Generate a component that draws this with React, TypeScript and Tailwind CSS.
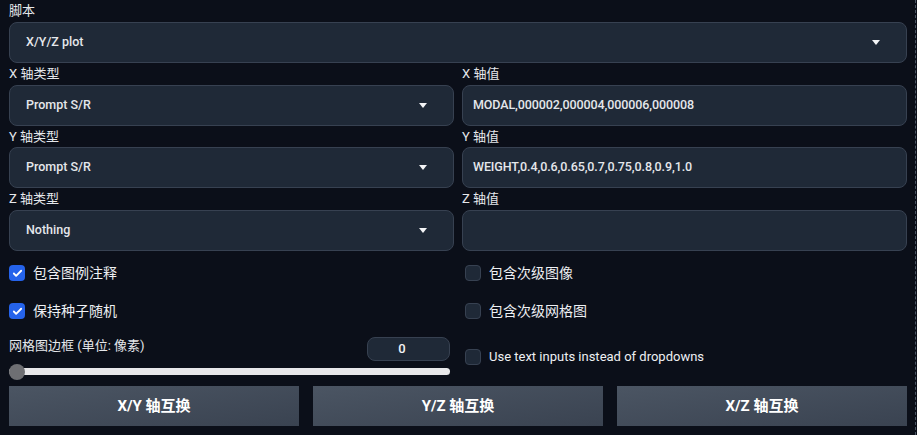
import { Check } from 'lucide-react';

const font = { fontFamily: 'Roboto, "Noto Sans CJK SC", sans-serif' };

function Caret() {
  return (
    <svg width="8" height="5" viewBox="0 0 8 5" className="shrink-0">
      <path d="M0 0H8L4 5Z" fill="#f3f4f6" />
    </svg>
  );
}

function Label({ text, className = '' }: { text: string; className?: string }) {
  return <div className={`text-[13px] text-[#e5e7eb] ${className}`}>{text}</div>;
}

function Dropdown({ value }: { value: string }) {
  return (
    <div className="h-[41px] flex items-center justify-between rounded-lg border border-[#374151] bg-[#1f2937] pl-[16px] pr-[26px]">
      <span className="text-[12.5px] font-medium text-[#e5e7eb]">{value}</span>
      <Caret />
    </div>
  );
}

function TextBox({ value }: { value: string }) {
  return (
    <div className="h-[41px] flex items-center rounded-lg border border-[#374151] bg-[#1f2937] px-[10px]">
      <span className="text-[12.5px] font-medium tracking-[-0.1px] text-[#e5e7eb]">{value}</span>
    </div>
  );
}

function CheckRow({ label, checked, className = '', textSize = 'text-[14px]' }: { label: string; checked?: boolean; className?: string; textSize?: string }) {
  return (
    <div className={`h-[38px] flex items-center gap-[8px] ${className}`}>
      {checked ? (
        <span className="w-[16px] h-[16px] rounded-[4px] bg-[#2563eb] flex items-center justify-center">
          <Check size={11} strokeWidth={4} color="white" />
        </span>
      ) : (
        <span className="w-[16px] h-[16px] rounded-[4px] bg-[#1f2937] border border-[#374151]" />
      )}
      <span className={`${textSize} text-[#eef0f3]`}>{label}</span>
    </div>
  );
}

function SwapButton({ text }: { text: string }) {
  return (
    <button
      type="button"
      className="h-[40px] flex items-center justify-center bg-linear-to-br from-[#4b5563] to-[#3a4351] text-white text-[15px] font-bold"
    >
      {text}
    </button>
  );
}

export default function App() {
  return (
    <div className="w-[917px] h-[435px] bg-[#0b0f19] overflow-hidden" style={font}>
      <div className="w-[916px] h-full border-r border-dashed border-[#4b5563] pl-[9px] pr-[8px]">
        {/* Script */}
        <Label text="脚本" className="leading-[22px]" />
        <Dropdown value="X/Y/Z plot" />

        {/* Axis rows */}
        <div className="grid grid-cols-2 gap-x-[8px]">
          <div>
            <Label text="X 轴类型" className="leading-[21.5px]" />
            <Dropdown value="Prompt S/R" />
          </div>
          <div>
            <Label text="X 轴值" className="leading-[21.5px]" />
            <TextBox value="MODAL,000002,000004,000006,000008" />
          </div>
          <div>
            <Label text="Y 轴类型" className="leading-[21.5px]" />
            <Dropdown value="Prompt S/R" />
          </div>
          <div>
            <Label text="Y 轴值" className="leading-[21.5px]" />
            <TextBox value="WEIGHT,0.4,0.6,0.65,0.7,0.75,0.8,0.9,1.0" />
          </div>
          <div>
            <Label text="Z 轴类型" className="leading-[21.5px]" />
            <Dropdown value="Nothing" />
          </div>
          <div>
            <Label text="Z 轴值" className="leading-[21.5px]" />
            <TextBox value="" />
          </div>
        </div>

        {/* Options */}
        <div className="grid grid-cols-2 gap-x-[8px] mt-[3.5px]">
          <div className="flex flex-col">
            <CheckRow label="包含图例注释" checked />
            <CheckRow label="保持种子随机" checked />
            <div className="pr-[4px] mt-[6.5px]">
              <div className="flex items-center justify-between h-[24px]">
                <span className="text-[13px] text-[#e5e7eb] -mt-[5px]">网格图边框 (单位: 像素)</span>
                <div className="w-[83px] h-[24px] rounded-lg border border-[#374151] bg-[#1f2937] flex items-center justify-center pr-[13px] text-[13px] font-medium text-[#f3f4f6]">
                  0
                </div>
              </div>
              <div className="relative h-[16px] mt-[3px] flex items-center">
                <div className="w-full h-[7px] rounded-full bg-[#e8e8ea]" />
                <div className="absolute left-0 top-0 w-[16px] h-[16px] rounded-full bg-[#6e6f73]" />
              </div>
            </div>
          </div>
          <div className="flex flex-col pl-[3px]">
            <CheckRow label="包含次级图像" />
            <CheckRow label="包含次级网格图" />
            <CheckRow label="Use text inputs instead of dropdowns" className="mt-[8px]" textSize="text-[13px]" />
          </div>
        </div>

        {/* Swap buttons */}
        <div className="grid grid-cols-3 gap-x-[14px] mt-[6.5px]">
          <SwapButton text="X/Y 轴互换" />
          <SwapButton text="Y/Z 轴互换" />
          <SwapButton text="X/Z 轴互换" />
        </div>
      </div>
    </div>
  );
}
